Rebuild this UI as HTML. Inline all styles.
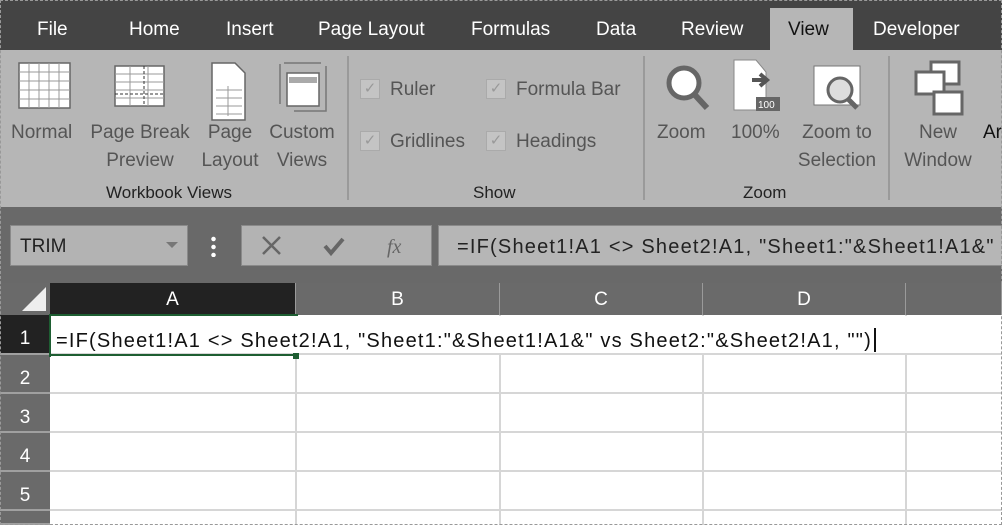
<!DOCTYPE html>
<html><head><meta charset="utf-8"><style>
*{margin:0;padding:0;box-sizing:border-box}
body{width:1002px;height:525px;overflow:hidden;background:#fff;font-family:"Liberation Sans",sans-serif;position:relative}
.abs{position:absolute}
#tabs{left:0;top:0;width:1002px;height:50px;background:#444}
.tab{position:absolute;top:19px;color:#fff;font-size:19px}
#ribbon{left:0;top:50px;width:1002px;height:157px;background:#b6b6b6}
.lbl{position:absolute;color:#555;font-size:19px;text-align:center;line-height:28px}
.grp{position:absolute;top:183px;color:#222;font-size:17px}
.sep{position:absolute;top:56px;width:2px;height:144px;background:#9a9a9a}
.cb{position:absolute;width:20px;height:20px;background:#c4c4c4;border:1px solid #aaa;color:#999;font-size:15px;text-align:center;line-height:18px}
#fbar{left:0;top:207px;width:1002px;height:76px;background:#696969}
.colh{position:absolute;top:283px;height:32px;background:#6a6a6a;color:#fff;font-size:19px;text-align:center;line-height:34px;border-right:1px solid #9a9a9a}
.rowh{position:absolute;left:0;width:50px;background:#6a6a6a;color:#fff;font-size:19px;text-align:center;border-bottom:2px solid #a0a0a0;padding-top:4px}
.hl{position:absolute;left:50px;width:952px;height:2px;background:#d6d6d6}
.vl{position:absolute;top:315px;width:2px;height:210px;background:#d6d6d6}
.ft{font-size:20px;letter-spacing:1.2px}
</style></head><body>
<div id="tabs" class="abs">
<div class="abs" style="left:770px;top:8px;width:83px;height:42px;background:#b6b6b6"></div>
<span class="tab" style="left:37px">File</span>
<span class="tab" style="left:129px">Home</span>
<span class="tab" style="left:226px">Insert</span>
<span class="tab" style="left:318px">Page Layout</span>
<span class="tab" style="left:471px">Formulas</span>
<span class="tab" style="left:596px">Data</span>
<span class="tab" style="left:681px">Review</span>
<span class="tab" style="left:788px;color:#111">View</span>
<span class="tab" style="left:873px">Developer</span>
</div>
<div id="ribbon" class="abs"></div>
<svg class="abs" style="left:0;top:50px" width="1002" height="157">
<g fill="#fff" stroke="#666" stroke-width="1.5">
<rect x="19" y="13" width="51" height="45"/>
<rect x="115" y="16" width="49" height="40"/>
<path d="M212 13h23l10 10v47h-33z"/>
<rect x="287" y="23" width="32" height="33"/>
</g>
<g stroke="#999" stroke-width="1">
<path d="M19 22h51M19 31h51M19 40h51M19 49h51M29 13v45M39 13v45M49 13v45M59 13v45"/>
<path d="M115 24h49M115 32h49M115 40h49M115 48h49M130 16v40M148 16v40"/>
<path d="M216 40h26M216 48h26M216 56h26M216 64h26M228 36v30"/>
</g>
<path d="M144 16v40M115 44h49" stroke="#333" stroke-dasharray="3,2"/>
<rect x="289" y="27" width="28" height="6" fill="#aaa"/>
<path d="M280 14v40M284 13h37M294 61h32v-45" stroke="#777" fill="none" stroke-width="1.5"/>
<circle cx="684" cy="33" r="15" fill="#fff" stroke="#666" stroke-width="5"/>
<path d="M695 45l12 13" stroke="#666" stroke-width="6"/>
<path d="M734 10h22l10 12v38h-32z" fill="#fff" stroke="#888"/>
<path d="M752 30h14M760 24l7 6-7 6" stroke="#555" stroke-width="4" fill="none"/>
<rect x="756" y="47" width="24" height="14" fill="#666"/><text x="758" y="58" font-size="10" fill="#fff" font-family="Liberation Sans">100</text>
<rect x="814" y="16" width="46" height="39" fill="#fff" stroke="#777"/>
<circle cx="840" cy="40" r="12" fill="#ddd" stroke="#666" stroke-width="3"/>
<path d="M848 49l9 9" stroke="#666" stroke-width="5"/>
<g fill="#fff" stroke="#666" stroke-width="3"><rect x="931" y="12" width="28" height="22"/><rect x="916" y="22" width="28" height="22"/><rect x="934" y="42" width="28" height="22"/></g>
</svg>
<div class="lbl" style="left:11px;top:119px">Normal</div>
<div class="lbl" style="left:88px;top:119px;width:104px">Page Break<br>Preview</div>
<div class="lbl" style="left:199px;top:119px;width:62px">Page<br>Layout</div>
<div class="lbl" style="left:266px;top:119px;width:72px">Custom<br>Views</div>
<div class="grp" style="left:106px">Workbook Views</div>
<div class="sep" style="left:347px"></div>
<div class="cb" style="left:360px;top:79px">✓</div><div class="lbl" style="left:390px;top:76px">Ruler</div>
<div class="cb" style="left:360px;top:131px">✓</div><div class="lbl" style="left:390px;top:128px">Gridlines</div>
<div class="cb" style="left:486px;top:79px">✓</div><div class="lbl" style="left:516px;top:76px">Formula Bar</div>
<div class="cb" style="left:486px;top:131px">✓</div><div class="lbl" style="left:516px;top:128px">Headings</div>
<div class="grp" style="left:473px">Show</div>
<div class="sep" style="left:643px"></div>
<div class="lbl" style="left:657px;top:119px">Zoom</div>
<div class="lbl" style="left:731px;top:119px">100%</div>
<div class="lbl" style="left:792px;top:119px;width:90px">Zoom to<br>Selection</div>
<div class="grp" style="left:743px">Zoom</div>
<div class="sep" style="left:888px"></div>
<div class="lbl" style="left:897px;top:119px;width:82px">New<br>Window</div>
<div class="lbl" style="left:983px;top:119px;color:#111">Ar</div>
<div id="fbar" class="abs"></div>
<div class="abs" style="left:10px;top:225px;width:178px;height:41px;background:#b3b3b3;border:1px solid #8a8a8a;font-size:19px;line-height:42px;padding-left:9px;color:#222">TRIM</div>
<svg class="abs" style="left:166px;top:242px" width="12" height="8"><path d="M0 0h12L6 6z" fill="#777"/></svg>
<div class="abs" style="left:211px;top:235px;width:5px;height:22px;background:radial-gradient(circle,#fff 2px,transparent 2.5px) 0 0/5px 8px repeat-y"></div>
<div class="abs" style="left:241px;top:225px;width:191px;height:41px;background:#b3b3b3;border:1px solid #8a8a8a"></div>
<svg class="abs" style="left:241px;top:225px" width="191" height="41"><path d="M22 12l17 17M39 12l-17 17" stroke="#666" stroke-width="2.5"/><path d="M84 21l6 7 12-14" stroke="#666" stroke-width="4" fill="none"/><text x="146" y="28" font-size="20" font-style="italic" font-family="Liberation Serif" fill="#666">fx</text></svg>
<div class="abs ft" style="left:438px;top:225px;width:564px;height:41px;background:#b6b6b6;border:1px solid #8a8a8a;border-right:none;line-height:42px;padding-left:18px;color:#222;white-space:nowrap;overflow:hidden">=IF(Sheet1!A1 &lt;&gt; Sheet2!A1, "Sheet1:"&amp;Sheet1!A1&amp;"</div>
<div class="abs" style="left:0;top:283px;width:50px;height:32px;background:#6a6a6a"></div>
<svg class="abs" style="left:22px;top:287px" width="25" height="25"><path d="M24 0v24H0z" fill="#eee"/></svg>
<div class="colh" style="left:50px;width:246px;background:#222">A</div>
<div class="colh" style="left:296px;width:204px">B</div>
<div class="colh" style="left:500px;width:203px">C</div>
<div class="colh" style="left:703px;width:203px">D</div>
<div class="colh" style="left:906px;width:96px"></div>
<div class="rowh" style="top:315px;height:40px;line-height:40px;background:#222">1</div>
<div class="rowh" style="top:355px;height:39px;line-height:39px">2</div>
<div class="rowh" style="top:394px;height:39px;line-height:39px">3</div>
<div class="rowh" style="top:433px;height:39px;line-height:39px">4</div>
<div class="rowh" style="top:472px;height:39px;line-height:39px">5</div>
<div class="rowh" style="top:511px;height:14px"></div>
<div class="hl" style="top:353px"></div><div class="hl" style="top:392px"></div><div class="hl" style="top:431px"></div><div class="hl" style="top:470px"></div><div class="hl" style="top:509px"></div>
<div class="vl" style="left:295px"></div><div class="vl" style="left:499px"></div><div class="vl" style="left:702px"></div><div class="vl" style="left:905px"></div>
<div class="abs ft" style="left:50px;top:316px;width:900px;height:37px;background:#fff;line-height:50px;padding-left:6px;color:#111;white-space:nowrap">=IF(Sheet1!A1 &lt;&gt; Sheet2!A1, "Sheet1:"&amp;Sheet1!A1&amp;" vs Sheet2:"&amp;Sheet2!A1, "")<span style="display:inline-block;width:2px;height:24px;background:#111;vertical-align:-5px;margin-left:2px"></span></div>
<div class="abs" style="left:49px;top:314px;width:249px;height:2px;background:#1e5e32"></div>
<div class="abs" style="left:49px;top:314px;width:2px;height:43px;background:#1e5e32"></div>
<div class="abs" style="left:49px;top:354px;width:246px;height:2px;background:#1e5e32"></div>
<div class="abs" style="left:293px;top:353px;width:6px;height:6px;background:#1e5e32"></div>
<div class="abs" style="left:0;top:0;width:1002px;height:525px;border:1px dashed #999;pointer-events:none"></div>
</body></html>
